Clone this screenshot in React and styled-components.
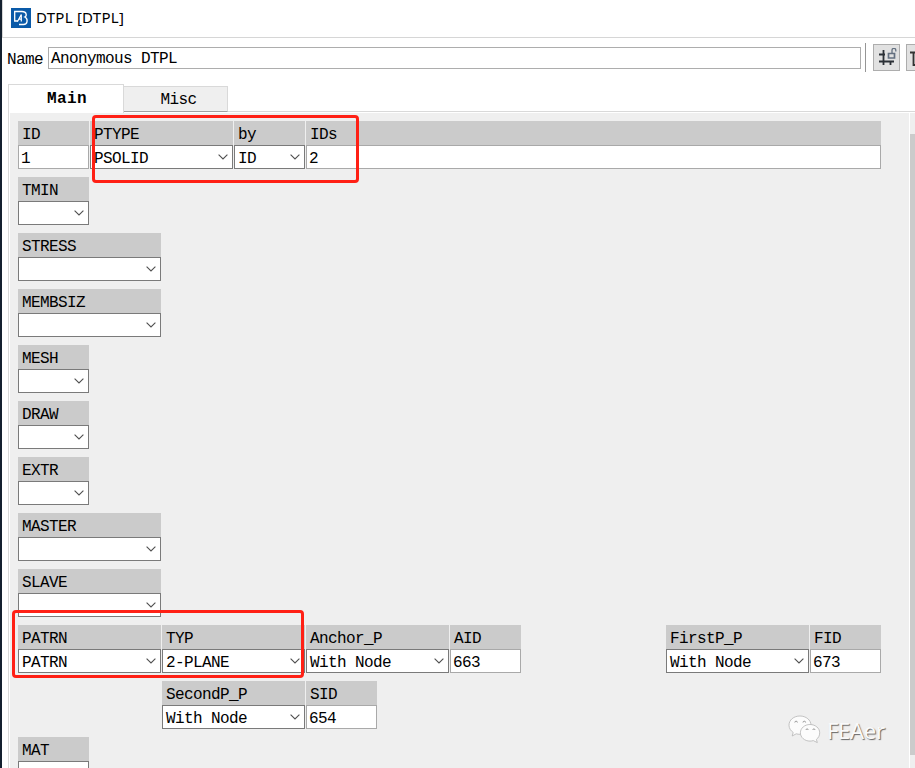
import styled, { createGlobalStyle } from "styled-components";

const rows = [
  [
    { label: "ID", value: "1", col: 1, span: 1 },
    { label: "PTYPE", value: "PSOLID", col: 2, span: 2, select: true },
    { label: "by", value: "ID", col: 4, span: 1, select: true },
    { label: "IDs", value: "2", col: 5, span: 8 },
  ],
  [{ label: "TMIN", col: 1, span: 1, select: true }],
  [{ label: "STRESS", col: 1, span: 2, select: true }],
  [{ label: "MEMBSIZ", col: 1, span: 2, select: true }],
  [{ label: "MESH", col: 1, span: 1, select: true }],
  [{ label: "DRAW", col: 1, span: 1, select: true }],
  [{ label: "EXTR", col: 1, span: 1, select: true }],
  [{ label: "MASTER", col: 1, span: 2, select: true }],
  [{ label: "SLAVE", col: 1, span: 2, select: true }],
  [
    { label: "PATRN", value: "PATRN", col: 1, span: 2, select: true },
    { label: "TYP", value: "2-PLANE", col: 3, span: 2, select: true },
    { label: "Anchor_P", value: "With Node", col: 5, span: 2, select: true },
    { label: "AID", value: "663", col: 7, span: 1 },
    { label: "FirstP_P", value: "With Node", col: 10, span: 2, select: true },
    { label: "FID", value: "673", col: 12, span: 1 },
  ],
  [
    { label: "SecondP_P", value: "With Node", col: 3, span: 2, select: true },
    { label: "SID", value: "654", col: 5, span: 1 },
  ],
  [{ label: "MAT", col: 1, span: 1, select: true }],
];

function LogoIcon() {
  return (
    <svg width="20" height="20" viewBox="0 0 20 20" fill="none">
      <rect width="20" height="20" fill="#0a5aa8" />
      <path d="M7 13H3.700V3.500H11c5 0 5 4.500 2.800 5.500c3.500 1.500 3 7.500-1.300 7.500H8" stroke="#fff" strokeWidth="1.300" />
      <path d="M6.500 13.500L10.300 6.500V13.500M8 11.200h2.300" stroke="#fff" strokeWidth="1.200" />
    </svg>
  );
}

function UnlockGridIcon() {
  return (
    <svg width="20" height="20" viewBox="0 0 20 20" fill="none">
      <path d="M6.500 2v15M2 6.500h6M2 13.500h15M13.500 13.500V17" stroke="#2b3036" strokeWidth="1.800" />
      <path d="M11.500 5.500h6v4.500h-6z" stroke="#647080" strokeWidth="1.700" />
      <path d="M15 5V2.300a1.900 1.900 0 0 1 3.800 0V3.500" stroke="#647080" strokeWidth="1.300" />
    </svg>
  );
}

function Chevron() {
  return (
    <svg width="10" height="6" viewBox="0 0 10 6" fill="none">
      <path d="M.6.6L5 5 9.400.6" stroke="#505050" strokeWidth="1.100" />
    </svg>
  );
}

function WechatIcon() {
  return (
    <svg width="33" height="30" viewBox="0 0 33 30">
      <g fill="#fcfcfc" stroke="#b5b5b5" strokeWidth=".8">
        <path d="M12 1C5.700 1 1 5 1 10.200c0 3 1.600 5.500 4.200 7.200L4.200 21l4-2.200c1.300.4 2.500.5 3.800.5 6 0 11-4 11-9.100S18 1 12 1z" />
        <path d="M22 9.500c-5.400 0-9.600 3.700-9.600 8.300s4.200 8.300 9.600 8.300c1.200 0 2.300-.2 3.300-.5l4 2-.9-3.200c2-1.500 3.300-3.800 3.300-6.600 0-4.600-4.300-8.300-9.700-8.300z" />
      </g>
      <g fill="none" stroke="#999" strokeWidth="1">
        <path d="M6.800 7.500a1.300 1.300 0 0 1 2.600 0M15 7.500a1.300 1.300 0 0 1 2.600 0" />
        <path d="M18 15a1.100 1.100 0 0 1 2.200 0M24.800 15a1.100 1.100 0 0 1 2.200 0" />
      </g>
    </svg>
  );
}

function Field({ field }) {
  return (
    <StyledField $col={field.col} $span={field.span}>
      <StyledLabel>{field.label}</StyledLabel>
      <StyledValue $select={field.select}>
        <span>{field.value}</span>
        {field.select && <Chevron />}
      </StyledValue>
    </StyledField>
  );
}

function App() {
  return (
    <>
      <GlobalStyle />
      <StyledWindow>
        <StyledTitleBar>
          <LogoIcon />
          <span>DTPL [DTPL]</span>
        </StyledTitleBar>
        <StyledNameRow>
          <StyledNameLabel>Name</StyledNameLabel>
          <StyledNameInput>Anonymous DTPL</StyledNameInput>
          <StyledSeparator />
          <StyledToolButton>
            <UnlockGridIcon />
          </StyledToolButton>
          <StyledToolButton>
            <svg width="20" height="20" viewBox="0 0 20 20" fill="none">
              <path d="M0 4.500h12M3.500 4.500V17H12" stroke="#333" strokeWidth="1.800" />
            </svg>
          </StyledToolButton>
        </StyledNameRow>
        <StyledTabs>
          <StyledTab $active>Main</StyledTab>
          <StyledTab>Misc</StyledTab>
        </StyledTabs>
        <StyledBody>
          <StyledForm>
            {rows.map((row) => (
              <StyledRow key={row[0].label}>
                {row.map((field) => (
                  <Field key={field.label} field={field} />
                ))}
              </StyledRow>
            ))}
          </StyledForm>
          <StyledScrollbar>
            <StyledThumb />
          </StyledScrollbar>
        </StyledBody>
        <StyledMark $x={92} $y={115} $w={267} $h={68} />
        <StyledMark $x={12} $y={610} $w={292} $h={68} />
        <StyledWatermark>
          <WechatIcon />
          <span>FEAer</span>
        </StyledWatermark>
      </StyledWindow>
    </>
  );
}

const GlobalStyle = createGlobalStyle`
  * {
    box-sizing: border-box;
  }

  body {
    margin: 0;
    overflow: hidden;
    background: #fff;
  }

  svg {
    display: block;
    flex-shrink: 0;
  }
`

const StyledWindow = styled.div`
  position: relative;
  display: flex;
  flex-direction: column;
  width: 915px;
  height: 768px;
  overflow: hidden;
  background: #fff;
  border-left: 2px solid #14202f;
  color: #000;
  font: 16px/20px "Liberation Mono", monospace;
  letter-spacing: -0.6px;
  white-space: pre;
`

const StyledTitleBar = styled.div`
  display: flex;
  align-items: center;
  gap: 5px;
  height: 38px;
  padding: 0 0 2px 8px;
  border-bottom: 1px solid #d6d6d6;
  border-left: 1px solid #d6d6d6;
  font: 15px/20px "Noto Sans", sans-serif;
  letter-spacing: 0.25px;
  flex-shrink: 0;

  span {
    margin-top: -2px;
  }
`

const StyledNameRow = styled.div`
  display: flex;
  align-items: flex-start;
  height: 46px;
  padding: 5px 0 0 5px;
  flex-shrink: 0;
`

const StyledNameLabel = styled.span`
  width: 41px;
  padding-top: 7px;
  flex-shrink: 0;
`

const StyledNameInput = styled.div`
  width: 813px;
  height: 22px;
  margin-top: 4px;
  padding-left: 2px;
  border: 1px solid #adadad;
  line-height: 23px;
  flex-shrink: 0;
`

const StyledSeparator = styled.div`
  width: 1px;
  height: 29px;
  margin: 0 7px 0 4px;
  background: #969696;
  flex-shrink: 0;
`

const StyledToolButton = styled.div`
  display: flex;
  align-items: center;
  justify-content: center;
  width: 27px;
  height: 27px;
  margin: 1px 6px 0 0;
  border: 1px solid #adadad;
  background: #e1e1e1;
  flex-shrink: 0;
`

const StyledTabs = styled.div`
  display: flex;
  align-items: flex-end;
  height: 29px;
  margin-left: 6px;
  box-shadow: inset 0 -1px #fff, inset 0 -2px #d9d9d9;
  flex-shrink: 0;
`

const StyledTab = styled.div`
  width: ${({ $active }) => ($active ? "116px" : "104px")};
  height: ${({ $active }) => ($active ? "29px" : "26px")};
  margin-bottom: ${({ $active }) => ($active ? "0" : "1px")};
  border: 1px solid #d9d9d9;
  border-left-width: ${({ $active }) => ($active ? "1px" : "0")};
  border-bottom: ${({ $active }) => ($active ? "none" : "1px solid #a0a0a0")};
  background: ${({ $active }) => ($active ? "#fff" : "#efefef")};
  font-weight: ${({ $active }) => ($active ? "bold" : "normal")};
  line-height: ${({ $active }) => ($active ? "29px" : "27px")};
  letter-spacing: ${({ $active }) => ($active ? "0.4px" : "-0.6px")};
  text-align: center;
  padding-left: ${({ $active }) => ($active ? "2px" : "6px")};
`

const StyledBody = styled.div`
  display: flex;
  flex: 1;
  min-height: 0;
  margin-left: 6px;
  padding-left: 1px;
  border-left: 1px solid #d9d9d9;
`

const StyledForm = styled.div`
  display: flex;
  flex-direction: column;
  gap: 8px;
  width: 899px;
  padding: 8px 0 0 8px;
  background: #efefef;
  overflow: hidden;
  flex-shrink: 0;
`

const StyledRow = styled.div`
  display: grid;
  grid-template-columns: repeat(12, 71px);
  column-gap: 1px;
  flex-shrink: 0;
`

const StyledField = styled.div`
  grid-column: ${({ $col, $span }) => `${$col} / span ${$span}`};
`

const StyledLabel = styled.div`
  height: 24px;
  padding-left: 4px;
  background: #cbcbcb;
  line-height: 29px;
`

const StyledValue = styled.div`
  display: flex;
  align-items: center;
  justify-content: space-between;
  height: 24px;
  padding: 0 4px 0 ${({ $select }) => ($select ? "3px" : "2px")};
  border: 1px solid ${({ $select }) => ($select ? "#7a7a7a" : "#a9a9a9")};
  background: #fff;

  span {
    padding-top: 3px;
  }
`

const StyledScrollbar = styled.div`
  width: 6px;
  padding-top: 21px;
  margin-left: 1px;
  background: #efefef;
`

const StyledThumb = styled.div`
  height: 621px;
  background: #cbcbcb;
`

const StyledMark = styled.div`
  position: absolute;
  left: ${({ $x }) => $x - 2}px;
  top: ${({ $y }) => $y}px;
  width: ${({ $w }) => $w}px;
  height: ${({ $h }) => $h}px;
  border: 3px solid #ff2015;
  border-radius: 4px;
`

const StyledWatermark = styled.div`
  position: absolute;
  left: 786px;
  top: 714px;
  display: flex;
  align-items: center;
  gap: 6px;
  color: #fafafa;
  font: 22px/32px "Noto Sans", sans-serif;
  letter-spacing: -0.3px;
  text-shadow: 1px 1px 1px #666;
`

export default App;
